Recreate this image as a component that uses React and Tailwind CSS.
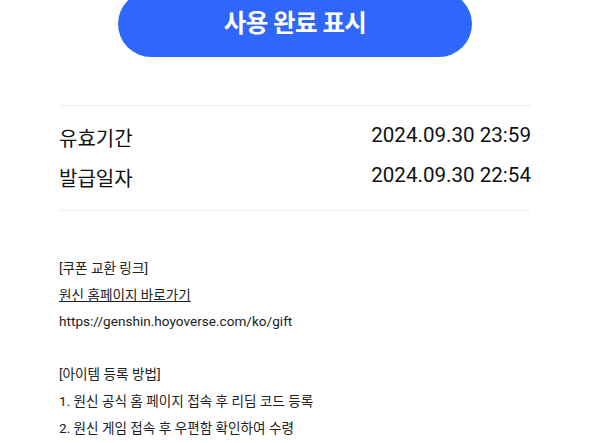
import React from "react";

const info = [
    { label: "유효기간", value: "2024.09.30 23:59" },
    { label: "발급일자", value: "2024.09.30 22:54" }
];

const App = () => {
    return (
        <div className="bg-white h-[443px] overflow-hidden text-[#111111] font-['Roboto','Noto_Sans_CJK_KR',sans-serif]">
            <div className="flex justify-center -mt-[9px]">
                <button className="w-[354px] h-[66px] rounded-full bg-[#2f66fb] text-white text-[24.5px] font-bold tracking-tight">
                    사용 완료 표시
                </button>
            </div>

            <div className="px-[59px] pt-[48px]">
                <div className="border-t border-[#eeeeee] border-b pt-[9px] pb-[15px]">
                    { info.map((row) => (
                        <div key={ row.label } className="flex justify-between items-center h-[40px]">
                            <p className="text-[20px] pt-[8px]">{ row.label }</p>
                            <p className="text-[20.6px]">{ row.value }</p>
                        </div>
                    )) }
                </div>

                <div className="pt-[44px] text-[13.6px] leading-[26.6px] text-[#222222]">
                    <p>[쿠폰 교환 링크]</p>
                    <p className="underline">원신 홈페이지 바로가기</p>
                    <p>https://genshin.hoyoverse.com/ko/gift</p>
                    <p>&nbsp;</p>
                    <p>[아이템 등록 방법]</p>
                    <p>1. 원신 공식 홈 페이지 접속 후 리딤 코드 등록</p>
                    <p>2. 원신 게임 접속 후 우편함 확인하여 수령</p>
                </div>
            </div>
        </div>
    );
};

export default App;
